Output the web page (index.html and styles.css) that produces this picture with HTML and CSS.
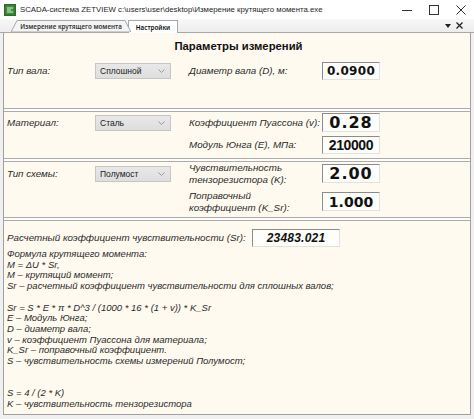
FILE: index.html
```html
<!DOCTYPE html>
<html lang="ru">
<head>
<meta charset="utf-8">
<title>SCADA-система ZETVIEW</title>
<link rel="stylesheet" href="styles.css">
</head>
<body>
<div class="window">
  <div class="titlebar">
    <svg class="appicon" viewBox="0 0 12 12">
      <rect x="0" y="0" width="12" height="12" fill="#2f6b2f"/>
      <rect x="1.5" y="1.5" width="9" height="9" fill="#3f8f3a"/>
      <path d="M3 4h6M3 6h4M3 8h6" stroke="#d9f0d0" stroke-width="1"/>
    </svg>
    <span class="title">SCADA-система ZETVIEW c:\users\user\desktop\Измерение крутящего момента.exe</span>
    <div class="controls">
      <div class="ctl"><svg width="10" height="10" viewBox="0 0 10 10"><path d="M0 5.5h10" stroke="#333" stroke-width="1"/></svg></div>
      <div class="ctl"><svg width="10" height="10" viewBox="0 0 10 10"><rect x="0.5" y="0.5" width="9" height="9" fill="none" stroke="#333" stroke-width="1"/></svg></div>
      <div class="ctl"><svg width="10" height="10" viewBox="0 0 10 10"><path d="M0.5 0.5l9 9M9.5 0.5l-9 9" stroke="#333" stroke-width="1"/></svg></div>
    </div>
  </div>

  <div class="tabbar">
    <div class="tab tab-inactive">
      <svg class="tabshape" viewBox="0 0 120 12" preserveAspectRatio="none"><polygon points="0,12 6,0.5 114,0.5 120,12" fill="#f4f4f4" stroke="#a8a8a8" stroke-width="1"/></svg>
      <span class="tabtext">Измерение крутящего момента</span>
    </div>
    <div class="tab tab-active"><span class="tabtext">Настройки</span></div>
    <div class="tabtools">
      <svg width="6" height="4" viewBox="0 0 6 4"><polygon points="0,0 6,0 3,4" fill="#222"/></svg>
      <svg width="7" height="7" viewBox="0 0 7 7"><path d="M0.5 0.5l6 6M6.5 0.5l-6 6" stroke="#222" stroke-width="1.3"/></svg>
    </div>
  </div>

  <div class="panel">
    <section class="sec sec1">
      <h1 class="heading">Параметры измерений</h1>
      <div class="grid grid1">
        <span class="lbl">Тип вала:</span>
        <div class="select"><span>Сплошной</span><svg class="chev" width="7" height="4" viewBox="0 0 7 4"><path d="M0.5 0.5l3 3 3-3" fill="none" stroke="#9a9a9a" stroke-width="1"/></svg></div>
        <span class="rlbl">Диаметр вала (D), м:</span>
        <div class="val v-mid">0.0900</div>
      </div>
    </section>
    <div class="sep"></div>

    <section class="sec sec2">
      <div class="grid grid2">
        <span class="lbl">Материал:</span>
        <div class="select"><span>Сталь</span><svg class="chev" width="7" height="4" viewBox="0 0 7 4"><path d="M0.5 0.5l3 3 3-3" fill="none" stroke="#9a9a9a" stroke-width="1"/></svg></div>
        <span class="rlbl">Коэффициент Пуассона (v):</span>
        <div class="val v-big">0.28</div>
        <span class="lbl"></span>
        <span></span>
        <span class="rlbl">Модуль Юнга (E), МПа:</span>
        <div class="val v-narrow">210000</div>
      </div>
    </section>
    <div class="sep"></div>

    <section class="sec sec3">
      <div class="grid grid3">
        <span class="lbl">Тип схемы:</span>
        <div class="select"><span>Полумост</span><svg class="chev" width="7" height="4" viewBox="0 0 7 4"><path d="M0.5 0.5l3 3 3-3" fill="none" stroke="#9a9a9a" stroke-width="1"/></svg></div>
        <span class="rlbl two">Чувствительность<br>тензорезистора (K):</span>
        <div class="val v-big">2.00</div>
        <span class="lbl"></span>
        <span></span>
        <span class="rlbl two">Поправочный<br>коэффициент (K_Sr):</span>
        <div class="val v-mid14">1.000</div>
      </div>
    </section>
    <div class="sep"></div>

    <section class="sec sec4">
      <div class="srrow">
        <span class="lbl srlbl">Расчетный коэффициент чувствительности (Sr):</span>
        <div class="val v-sr">23483.021</div>
      </div>
      <p class="formula">Формула крутящего момента:
M = ΔU * Sr,
M – крутящий момент;
Sr – расчетный коэффициент чувствительности для сплошных валов;

Sr = S * E * π * D^3 / (1000 * 16 * (1 + v)) * K_Sr
E – Модуль Юнга;
D – диаметр вала;
v – коэффициент Пуассона для материала;
K_Sr – поправочный коэффициент.
S – чувствительность схемы измерений Полумост;


S = 4 / (2 * K)
K – чувствительность тензорезистора</p>
    </section>
  </div>
</div>
</body>
</html>
```

FILE: styles.css
```css
* { box-sizing: border-box; }

body {
  margin: 0;
  background: #f0f0f0;
  font-family: "Liberation Sans", Arial, sans-serif;
}

.window {
  width: 474px;
  height: 419px;
  overflow: hidden;
  background: #f0f0f0;
  display: flex;
  flex-direction: column;
}

/* title bar */
.titlebar {
  flex: none;
  height: 19px;
  background: #fff;
  display: flex;
  align-items: center;
}
.appicon {
  width: 12px;
  height: 12px;
  margin: 0 4px 0 4px;
  flex: none;
}
.title {
  font-family: "Liberation Sans", Arial, sans-serif;
  font-size: 7.8px;
  color: #1e1e1e;
  white-space: nowrap;
}
.controls {
  margin-left: auto;
  display: flex;
}
.ctl {
  width: 27px;
  height: 19px;
  display: flex;
  align-items: center;
  justify-content: center;
}

/* tabs */
.tabbar {
  flex: none;
  height: 14px;
  background: linear-gradient(#f8f8f8, #ececec);
  border-bottom: 1px solid #a8a8a8;
  display: flex;
  align-items: flex-end;
  padding-left: 11px;
}
.tab {
  height: 12px;
  display: flex;
  align-items: center;
  justify-content: center;
  font-family: "Noto Sans", "Liberation Sans", sans-serif;
  font-size: 6.3px;
  font-weight: 600;
  color: #333;
  white-space: nowrap;
}
.tab-inactive {
  position: relative;
  width: 120px;
}
.tabshape {
  position: absolute;
  left: 0;
  top: 0;
  width: 120px;
  height: 12px;
}
.tabtext { position: relative; }
.tab-active {
  width: 50px;
  margin-left: -3px;
  height: 13px;
  margin-bottom: -1px;
  background: #fff;
  border: 1px solid #a8a8a8;
  border-bottom: none;
  color: #111;
}
.tabtools {
  margin-left: auto;
  margin-right: 11px;
  height: 13px;
  display: flex;
  align-items: center;
  gap: 5px;
}

/* panel */
.panel {
  flex: 1;
  margin: 0 3px 4px 3px;
  background: #fffaf0;
  border-left: 1px solid #a0a0a0;
  border-right: 1px solid #a0a0a0;
  border-bottom: 1px solid #a0a0a0;
  display: flex;
  flex-direction: column;
  color: #2a2a2a;
}
.sep {
  flex: none;
  height: 4px;
  border-top: 1px solid #ababab;
  border-bottom: 1px solid #ababab;
  background: #fdfdfb;
}
.sec { flex: none; padding-left: 3px; }
.sec1 { height: 75px; padding-top: 5px; }
.sec2 { height: 46px; padding-top: 1px; }
.sec3 { height: 55px; padding-top: 2px; }
.sec4 { flex: 1; padding-top: 8px; }

.heading {
  margin: 0;
  text-align: center;
  font-size: 11.3px;
  line-height: 16px;
  font-weight: bold;
  color: #111;
}

.grid {
  display: grid;
  grid-template-columns: 88px 76px 18px 133px 58px;
  align-items: center;
}
.grid .rlbl { grid-column: 4; }
.grid .val { grid-column: 5; }
.grid .lbl { grid-column: 1; }
.grid .select { grid-column: 2; }
.grid1 { margin-top: 8px; grid-template-rows: 18px; }
.grid2 { grid-template-rows: 19px 18px; row-gap: 4px; }
.grid3 { grid-template-rows: 19px 19px; row-gap: 9px; }

.lbl, .rlbl {
  font-size: 9.8px;
  font-style: italic;
  line-height: 12px;
  white-space: nowrap;
}

.select {
  height: 16px;
  background: linear-gradient(#e8e8e8, #dedede);
  border: 1px solid #c6c6c6;
  display: flex;
  align-items: center;
  justify-content: space-between;
  padding: 0 5px 0 4px;
  font-size: 8.5px;
  color: #1a1a1a;
}
.chev { flex: none; }

.val {
  height: 100%;
  background: #fdfdfa;
  border-top: 1px solid #8c8c8c;
  border-left: 1px solid #8c8c8c;
  border-right: 1px solid #e2e2e2;
  border-bottom: 1px solid #e2e2e2;
  display: flex;
  align-items: center;
  justify-content: center;
  color: #111;
  font-weight: bold;
  white-space: nowrap;
}
.v-mid {
  font-family: "DejaVu Sans", sans-serif;
  font-size: 12px;
  letter-spacing: 0.3px;
}
.v-big {
  font-family: "DejaVu Sans", sans-serif;
  font-size: 16px;
  letter-spacing: 1px;
}
.v-mid14 {
  font-family: "DejaVu Sans", sans-serif;
  font-size: 14px;
}
.v-narrow {
  font-family: "Liberation Sans", sans-serif;
  font-size: 14px;
  letter-spacing: -0.4px;
}

.srrow {
  display: flex;
  align-items: center;
  height: 18px;
}
.srlbl { width: 245px; flex: none; }
.v-sr {
  width: 88px;
  height: 18px;
  font-style: italic;
  font-size: 12px;
  letter-spacing: 0.2px;
}

.formula {
  margin: 2px 0 0 0;
  white-space: pre-line;
  font-size: 9.5px;
  line-height: 10.7px;
  font-style: italic;
  color: #2a2a2a;
}
```
